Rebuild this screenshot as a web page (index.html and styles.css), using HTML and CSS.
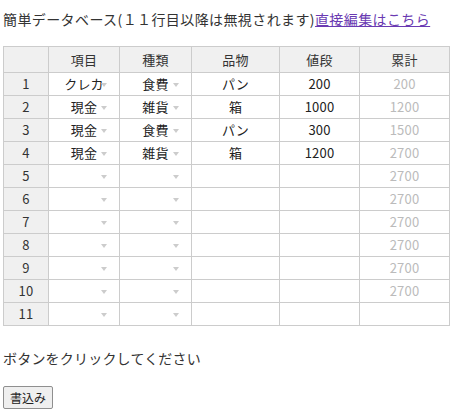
FILE: index.html
```html
<!DOCTYPE html>
<html lang="ja">
<head>
<meta charset="utf-8">
<title>簡単データベース</title>
<link rel="stylesheet" href="styles.css">
</head>
<body>
<div class="title">簡単データベース(１１行目以降は無視されます)<a class="edit-link" href="#">直接編集はこちら</a></div>

<div class="sheet">
  <div class="cell corner"></div>
  <div class="cell head">項目</div>
  <div class="cell head">種類</div>
  <div class="cell head">品物</div>
  <div class="cell head">値段</div>
  <div class="cell head">累計</div>

  <div class="cell rowhead">1</div>
  <div class="cell drop">クレカ<span class="arrow"></span></div>
  <div class="cell drop">食費<span class="arrow"></span></div>
  <div class="cell">パン</div>
  <div class="cell">200</div>
  <div class="cell dim">200</div>

  <div class="cell rowhead">2</div>
  <div class="cell drop">現金<span class="arrow"></span></div>
  <div class="cell drop">雑貨<span class="arrow"></span></div>
  <div class="cell">箱</div>
  <div class="cell">1000</div>
  <div class="cell dim">1200</div>

  <div class="cell rowhead">3</div>
  <div class="cell drop">現金<span class="arrow"></span></div>
  <div class="cell drop">食費<span class="arrow"></span></div>
  <div class="cell">パン</div>
  <div class="cell">300</div>
  <div class="cell dim">1500</div>

  <div class="cell rowhead">4</div>
  <div class="cell drop">現金<span class="arrow"></span></div>
  <div class="cell drop">雑貨<span class="arrow"></span></div>
  <div class="cell">箱</div>
  <div class="cell">1200</div>
  <div class="cell dim">2700</div>

  <div class="cell rowhead">5</div>
  <div class="cell drop"><span class="arrow"></span></div>
  <div class="cell drop"><span class="arrow"></span></div>
  <div class="cell"></div>
  <div class="cell"></div>
  <div class="cell dim">2700</div>

  <div class="cell rowhead">6</div>
  <div class="cell drop"><span class="arrow"></span></div>
  <div class="cell drop"><span class="arrow"></span></div>
  <div class="cell"></div>
  <div class="cell"></div>
  <div class="cell dim">2700</div>

  <div class="cell rowhead">7</div>
  <div class="cell drop"><span class="arrow"></span></div>
  <div class="cell drop"><span class="arrow"></span></div>
  <div class="cell"></div>
  <div class="cell"></div>
  <div class="cell dim">2700</div>

  <div class="cell rowhead">8</div>
  <div class="cell drop"><span class="arrow"></span></div>
  <div class="cell drop"><span class="arrow"></span></div>
  <div class="cell"></div>
  <div class="cell"></div>
  <div class="cell dim">2700</div>

  <div class="cell rowhead">9</div>
  <div class="cell drop"><span class="arrow"></span></div>
  <div class="cell drop"><span class="arrow"></span></div>
  <div class="cell"></div>
  <div class="cell"></div>
  <div class="cell dim">2700</div>

  <div class="cell rowhead">10</div>
  <div class="cell drop"><span class="arrow"></span></div>
  <div class="cell drop"><span class="arrow"></span></div>
  <div class="cell"></div>
  <div class="cell"></div>
  <div class="cell dim">2700</div>

  <div class="cell rowhead">11</div>
  <div class="cell drop"><span class="arrow"></span></div>
  <div class="cell drop"><span class="arrow"></span></div>
  <div class="cell"></div>
  <div class="cell"></div>
  <div class="cell dim"></div>
</div>

<p class="message">ボタンをクリックしてください</p>
<button class="write-btn" type="button">書込み</button>
</body>
</html>
```

FILE: styles.css
```css
html, body {
  margin: 0;
  padding: 0;
  background: #ffffff;
}

body {
  padding-left: 3px;
  font-family: "Noto Sans CJK JP", "Noto Sans", sans-serif;
  color: #333333;
}

.title {
  margin-top: 9px;
  font-size: 14px;
  line-height: 20px;
  height: 20px;
  white-space: nowrap;
  letter-spacing: 0.4px;
}

.edit-link {
  color: #6a3ab2;
  text-decoration: underline;
}

.sheet {
  margin-top: 17px;
  display: grid;
  grid-template-columns: 45px 71px 72px 88px 80px 90px;
  grid-auto-rows: 23px;
  grid-template-rows: 26px;
  width: max-content;
  border-top: 1px solid #cccccc;
  border-left: 1px solid #cccccc;
}

.cell {
  position: relative;
  box-sizing: border-box;
  border-right: 1px solid #cccccc;
  border-bottom: 1px solid #cccccc;
  font-size: 13px;
  line-height: 22px;
  text-align: center;
  color: #222222;
  white-space: nowrap;
  overflow: hidden;
  letter-spacing: 0.2px;
}

.corner,
.head {
  background: #f0f0f0;
  line-height: 25px;
  color: #333333;
}

.rowhead {
  background: #f0f0f0;
  color: #333333;
}

.dim {
  color: #bbbbbb;
}

.arrow {
  position: absolute;
  right: 12px;
  top: 10px;
  width: 0;
  height: 0;
  border-left: 3.5px solid transparent;
  border-right: 3.5px solid transparent;
  border-top: 4px solid #cccccc;
}

.message {
  margin: 22px 0 0 0;
  font-size: 14px;
  line-height: 20px;
  color: #333333;
  letter-spacing: 0.2px;
}

.write-btn {
  display: block;
  margin-top: 18px;
  margin-left: 0;
  width: 50px;
  height: 23px;
  padding: 0;
  font-family: "Noto Sans CJK JP", "Noto Sans", sans-serif;
  font-size: 12px;
  line-height: 20px;
  color: #222222;
  background: #efefef;
  border: 1px solid #8f8f8f;
  border-radius: 2px;
}
```
